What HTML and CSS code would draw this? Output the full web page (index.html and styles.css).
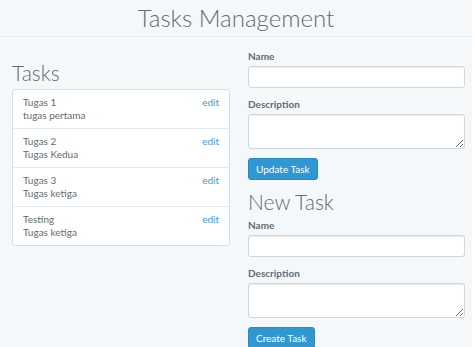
FILE: index.html
```html
<!DOCTYPE html>
<html lang="en">
<head>
<meta charset="utf-8">
<title>Tasks Management</title>
<link rel="stylesheet" href="styles.css">
</head>
<body>
<header class="topbar">
  <h1 class="title">Tasks Management</h1>
</header>
<main class="layout">
  <section class="tasks">
    <h2 class="heading">Tasks</h2>
    <ul class="task-list">
      <li class="task">
        <div class="task-text"><div class="task-name">Tugas 1</div><div class="task-desc">tugas pertama</div></div>
        <a class="edit" href="#">edit</a>
      </li>
      <li class="task">
        <div class="task-text"><div class="task-name">Tugas 2</div><div class="task-desc">Tugas Kedua</div></div>
        <a class="edit" href="#">edit</a>
      </li>
      <li class="task">
        <div class="task-text"><div class="task-name">Tugas 3</div><div class="task-desc">Tugas ketiga</div></div>
        <a class="edit" href="#">edit</a>
      </li>
      <li class="task">
        <div class="task-text"><div class="task-name">Testing</div><div class="task-desc">Tugas ketiga</div></div>
        <a class="edit" href="#">edit</a>
      </li>
    </ul>
  </section>
  <section class="forms">
    <form class="task-form">
      <div class="group">
        <label class="label">Name</label>
        <input class="field" type="text">
      </div>
      <div class="group">
        <label class="label">Description</label>
        <textarea class="field area"></textarea>
      </div>
      <button class="btn" type="button">Update Task</button>
    </form>
    <h2 class="heading new-heading">New Task</h2>
    <form class="task-form">
      <div class="group">
        <label class="label">Name</label>
        <input class="field" type="text">
      </div>
      <div class="group">
        <label class="label">Description</label>
        <textarea class="field area"></textarea>
      </div>
      <button class="btn" type="button">Create Task</button>
    </form>
  </section>
</main>
</body>
</html>
```

FILE: styles.css
```css
html {
  background: #ffffff;
}
body {
  margin: 0 2px 0 0;
  background: #f5f8fa;
  color: #636b6f;
  font-family: Lato, "Open Sans", sans-serif;
  font-size: 10px;
  line-height: 14px;
  min-height: 347px;
  overflow: hidden;
}
.topbar {
  height: 36px;
  border-bottom: 1px solid #e6ebef;
  display: flex;
  justify-content: center;
  align-items: center;
}
.title {
  margin: 0;
  font-weight: 300;
  font-size: 24px;
  line-height: 30px;
  color: #636b6f;
}
.layout {
  display: grid;
  grid-template-columns: 218px 217px;
  column-gap: 18px;
  padding: 12px 0 0 12px;
}
.heading {
  margin: 0;
  font-weight: 300;
  font-size: 21px;
  line-height: 24px;
  color: #636b6f;
}
.tasks .heading {
  margin-top: 12px;
  margin-bottom: 4px;
}
.task-list {
  list-style: none;
  margin: 0;
  padding: 0;
  background: #fff;
  border: 1px solid #d3e0e9;
  border-radius: 3px;
}
.task {
  display: flex;
  justify-content: space-between;
  padding: 6px 10px 6px 10px;
  line-height: 13px;
  border-top: 1px solid #e4ebf0;
}
.task:first-child {
  border-top: 0;
}
.edit {
  color: #3a9bd2;
  text-decoration: none;
}
.group {
  display: flex;
  flex-direction: column;
  margin-bottom: 9px;
}
.label {
  font-weight: 700;
  margin-bottom: 3px;
}
.field {
  box-sizing: border-box;
  height: 22px;
  width: 100%;
  margin: 0;
  border: 1px solid #d3d6d8;
  border-radius: 3px;
  background: #fff;
  box-shadow: inset 0 1px 1px rgba(0,0,0,0.075);
  font: inherit;
}
.area {
  height: 35px;
  resize: vertical;
}
.btn {
  height: 22px;
  padding: 0 7px;
  border: 1px solid #2a88bd;
  border-radius: 3px;
  background: #3097d1;
  color: #fff;
  font-family: inherit;
  font-size: 10px;
}
.new-heading {
  margin-top: 10px;
  margin-bottom: 4px;
}
```
